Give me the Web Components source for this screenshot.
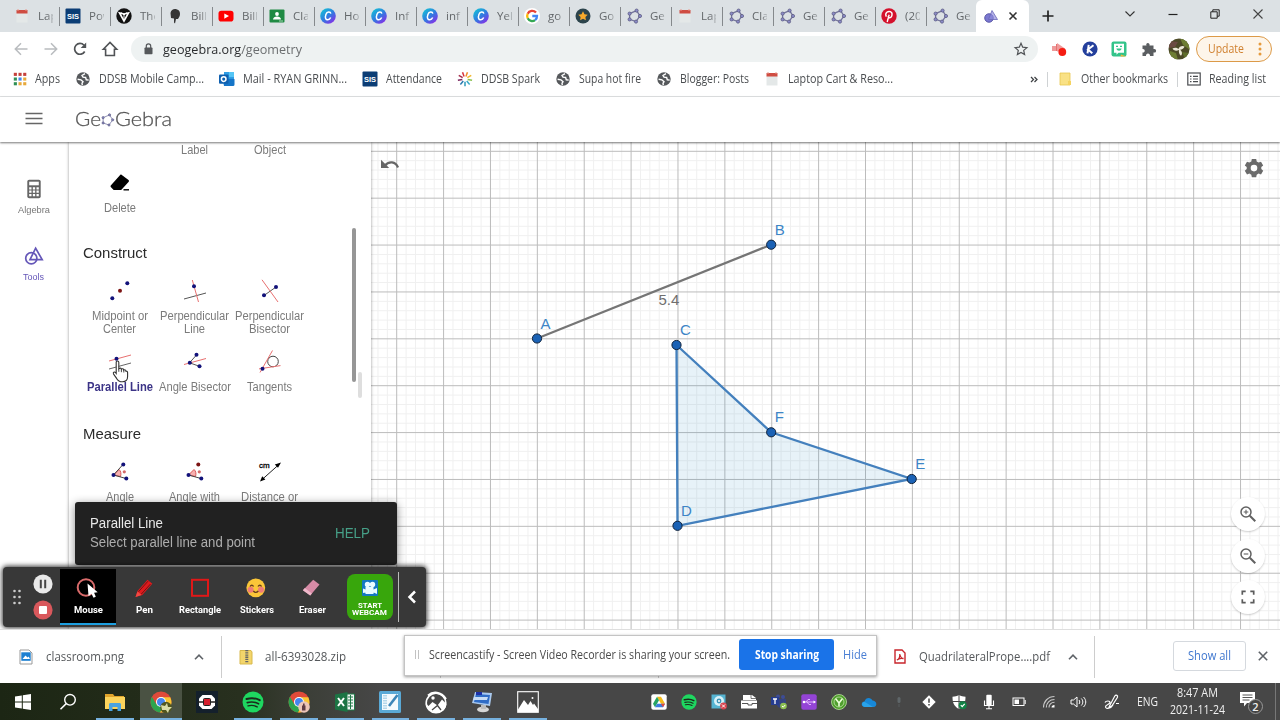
<!DOCTYPE html>
<html lang="en">
<head>
<meta charset="utf-8">
<title>GeoGebra Geometry</title>
<style>
html, body { margin: 0; height: 100%; overflow: hidden; }
body {
  width: 1280px;
  height: 720px;
  display: flex;
  flex-direction: column;
  background: #fff;
  font: 12px/1 "Open Sans", "Noto Sans", sans-serif;
  color: #4a4d50;
}
main { flex: 1; min-height: 0; display: flex; position: relative; }
</style>
</head>
<body>
<tab-strip></tab-strip>
<address-bar></address-bar>
<bookmark-bar></bookmark-bar>
<geo-header></geo-header>
<main>
  <side-rail></side-rail>
  <tool-panel></tool-panel>
  <geo-canvas></geo-canvas>
  <snack-bar>
    <fit-text w="73">Parallel Line</fit-text>
    <fit-text slot="detail" w="165">Select parallel line and point</fit-text>
    <fit-text slot="action" w="35">HELP</fit-text>
  </snack-bar>
  <cast-bar></cast-bar>
</main>
<download-bar></download-bar>
<task-bar></task-bar>

<script>
const pentagon = (c, r, w) => {
  const p = [[3.6, 5.6], [10.6, 2.6], [14, 8], [10, 13.6], [3.6, 11.4]];
  return `<path d="M${p.map(a => a.join(' ')).join('L')}z" fill="none" stroke="${c}" stroke-width="${w}"/>` +
    p.map(a => `<circle cx="${a[0]}" cy="${a[1]}" r="${r}" fill="#8b8bc8" stroke="#55557a" stroke-width=".7"/>`).join('');
};

const chrome = `<circle cx="11" cy="11" r="10.5" fill="#e04a3a"/>
<path d="M1.9 5.8A10.5 10.5 0 0 0 10 21.5l4.6-8L11 11 6.5 13.5z" fill="#2da44e"/>
<path d="M10 21.5A10.5 10.5 0 0 0 20.2 6.2H11l4 7z" fill="#f9c632"/>
<circle cx="11" cy="11" r="5" fill="#fff"/><circle cx="11" cy="11" r="4" fill="#4486f0"/>`;

const spotify = `<circle cx="11" cy="11" r="10.5" fill="#1ed760"/>
<g fill="none" stroke="#1b2b1c" stroke-linecap="round"><path d="M4.5 8c4.500-1.300 9.500-.9 13.200 1.200" stroke-width="2"/>
<path d="M5.300 11.600c4-1.100 7.900-.6 11.200 1.200" stroke-width="1.700"/><path d="M6 14.900c3.200-.9 6.500-.5 9.200 1" stroke-width="1.400"/></g>`;

const dot = (x, y, c = '#12127a', r = 2) => `<circle cx="${x}" cy="${y}" r="${r}" fill="${c}"/>`;
const zoomGlass = inner => `<g fill="none" stroke="#616161" stroke-width="1.500"><circle cx="6" cy="6" r="5"/><path d="M9.800 9.800L15.300 15.300" stroke-width="2"/>${inner}</g>`;

// name: [width, height, markup]
const ICONS = {
  cal: [16, 16, '<path d="M2.500 5h11v9.500h-11z" fill="#e4e8e8"/><path d="M2.500 2h11v3.500h-11z" fill="#cf4d42"/><path d="M4 1v2M12 1v2" stroke="#e99a90"/>'],
  sis: [16, 16, '<rect x=".5" y=".5" width="15" height="15" rx="1" fill="#0b3d75"/><text x="8" y="11" text-anchor="middle" font-size="7.500" font-weight="700" font-family="Liberation Sans" fill="#fff">SIS</text>'],
  trillium: [16, 16, '<circle cx="8" cy="8" r="7.700" fill="#111"/><path d="M8 13L3.500 5l4.500 1 4.500-1z" fill="none" stroke="#fff" stroke-width="1.600"/><path d="M8 12V7L5.500 4.500M8 7l2.500-2.500" stroke="#fff" fill="none"/>'],
  head: [16, 16, '<path d="M3.500 5C4 1.500 7 .5 9.500 1.200c3.500.8 4 4 3.200 6.800L11 11H9l-1 4.500-1-1V10.500L4 10z" fill="#353535"/>'],
  youtube: [16, 16, '<rect x=".5" y="2.700" width="15" height="10.800" rx="2.800" fill="#f00"/><path d="M6.300 5.400v5.300L11 8z" fill="#fff"/>'],
  classroom: [16, 16, '<rect x=".5" y="1.500" width="15" height="13" rx="1" fill="#1f8a43"/><circle cx="8" cy="6" r="1.900" fill="#fff"/><path d="M4 11.500c0-4 8-4 8 0z" fill="#fff"/><path d="M10 13h4" stroke="#a5d6b2"/>'],
  canva: [16, 16, '<circle cx="8" cy="8" r="7.800" fill="url(#cv)"/><linearGradient id="cv" x1="0" y1="0" x2=".8" y2="1"><stop offset=".1" stop-color="#15bfd6"/><stop offset=".55" stop-color="#2f7de0"/><stop offset="1" stop-color="#8a2be8"/></linearGradient><path d="M10.800 5.700C10.500 3.500 7 3.300 5.900 6.500 4.600 10.300 6 12 7.800 11.800c1.500-.2 2.300-1.100 2.900-2.300" fill="none" stroke="#fff" stroke-width="1.500"/>'],
  google: [16, 16, '<circle cx="8" cy="8" r="8" fill="#fff"/><g fill="none" stroke-width="2.300"><path d="M12 4.600A5 5 0 0 0 3.700 5.800" stroke="#ea4335"/><path d="M3.700 5.800a5 5 0 0 0 0 4.500" stroke="#fbbc05"/><path d="M3.700 10.300a5 5 0 0 0 7.400 1.800" stroke="#34a853"/><path d="M11.100 12.100A5 5 0 0 0 13 8H8.300" stroke="#4285f4"/></g>'],
  star: [16, 16, '<circle cx="8" cy="8" r="7.500" fill="#2c444c"/><path d="M8 3.300l1.500 3 3.200.5-2.300 2.200.5 3.200L8 10.700l-2.900 1.500.5-3.200-2.300-2.200 3.200-.5z" fill="#f8aa2c"/>'],
  geo: [16, 16, pentagon('#73739a', 1.6, 1.3)],
  logoO: [14, 14, `<g transform="translate(-1.2 -.5) scale(.92)">${pentagon('#8a8ab0', 1.2, 1)}</g>`],
  pin: [16, 16, '<circle cx="8" cy="8" r="7.700" fill="#d4112c"/><path d="M6.200 14l1.900-7.300M5.300 8.600C3.300 4.300 7.400 3 9.300 3.700c3.100 1.200 1.600 6.200-.6 6-1.100 0-1.600-1-1.400-1.600" fill="none" stroke="#fff" stroke-width="1.400"/>'],
  shapes: [14, 14, '<circle cx="5" cy="9" r="4.300" fill="#7b78d0" stroke="#49469a" stroke-width=".8"/><path d="M8 1.500l5.500 9H4.500z" fill="#8f8cdcaa" stroke="#6a67b8" stroke-width=".8"/>'],
  x: [10, 10, '<path d="M1.500 1.500l7 7M8.500 1.500l-7 7" stroke="#333" stroke-width="1.600"/>'],
  dismiss: [10, 10, '<path d="M.8.8l8.400 8.400M9.200.8L.8 9.200" stroke="#5f6368" stroke-width="1.600"/>'],
  plus: [12, 12, '<path d="M6 .5v11M.5 6h11" stroke="#222" stroke-width="1.700"/>'],
  down: [12, 8, '<path d="M1.500 1.500L6 6l4.500-4.500" fill="none" stroke="#333" stroke-width="1.100"/>'],
  up: [10, 8, '<path d="M1 6.300L5 2.200l4 4.100" fill="none" stroke="#5f6368" stroke-width="1.600"/>'],
  min: [10, 10, '<path d="M.5 5.500h9" stroke="#222" stroke-width="1.200"/>'],
  max: [10, 10, '<path d="M.8 2.800h6.400v6.400H.8zM2.800 2.800V.8h6.400v6.400H7.200" fill="none" stroke="#222"/>'],
  close: [12, 12, '<path d="M1.500 1.500l9 9M10.500 1.500l-9 9" stroke="#444" stroke-width="1.100"/>'],
  back: [14, 14, '<path d="M13.500 7H1.500M7 1.300L1.300 7 7 12.700" fill="none" stroke="#b9bcbf" stroke-width="1.500"/>'],
  fwd: [14, 14, '<path d="M.5 7h12M7 1.300L12.700 7 7 12.700" fill="none" stroke="#b9bcbf" stroke-width="1.500"/>'],
  reload: [14, 14, '<path d="M11.700 9.500A5.400 5.400 0 1 1 11 3.200" fill="none" stroke="#505356" stroke-width="1.700"/><path d="M13.200.5v5.500H7.700z" fill="#505356"/>'],
  home: [16, 16, '<path d="M1.300 8.300L8 1.500l6.700 6.800h-2.300v6.200H3.600V8.300z" fill="none" stroke="#505356" stroke-width="1.600"/>'],
  lock: [9, 12, '<rect x=".5" y="4.500" width="8" height="6.800" rx=".8" fill="#55585b"/><path d="M2.300 5V3a2.200 2.200 0 0 1 4.400 0v2" fill="none" stroke="#55585b" stroke-width="1.200"/>'],
  favorite: [14, 14, '<path d="M7 1.300l1.700 3.900 4.200.4-3.200 2.800.9 4.200L7 10.400l-3.600 2.200.9-4.200L1.100 5.600l4.200-.4z" fill="none" stroke="#505356" stroke-width="1.200"/>'],
  cast: [18, 16, '<path d="M2 5h4v5H2zM7 5V2l8 5.500-1 2-7 1z" fill="#ef9a9a"/><path d="M6.500 3v7" stroke="#e57373"/><circle cx="12.300" cy="11" r="3.900" fill="#f51d13"/>'],
  kami: [16, 16, '<circle cx="8" cy="8" r="7.600" fill="#243f9c"/><path d="M6.700 3.800l-1.200 8.500M11.500 4.200L6 8.500l4.300 3.700" stroke="#fff" stroke-width="2" fill="none"/>'],
  bitmoji: [16, 16, '<rect x=".5" y=".5" width="15" height="15" rx="2" fill="#33c48a"/><path d="M3 2.800h10v8.900H7.500L5.500 13.700v-2H3z" fill="#fff"/><path d="M5.300 7.500c1 3 4.400 3 5.400 0z" fill="#33c48a"/><path d="M5 5.300h2M9 5.300h2" stroke="#33c48a" stroke-width="1.200"/><path d="M10 13.500l5.500 2h-6z" fill="#f2b33c"/>'],
  puzzle: [16, 16, '<path d="M1.500 4.500h4C4 1 9.500 1 8.500 4.500h4V8c3.500-1 3.500 4.500 0 3.500v3.500H9c.5-3.500-4.500-3.500-4 0H1.500v-3.500c3 .5 3-4 0-3.500z" fill="#5b5e61"/>'],
  avatar: [22, 22, '<clipPath id="av"><circle cx="11" cy="11" r="10.500"/></clipPath><g clip-path="url(#av)"><path d="M0 0h22v22H0z" fill="#4c4a27"/><path d="M12 0l10 3v9l-7-5zM2 13l6 2 2 7H0z" fill="#6d7d33"/><path d="M1 3l9 1-3 5-6 1z" fill="#6b4b42"/><path d="M14 14l7 1-4 6z" fill="#5f6e2c"/><path d="M11 12c-3 1.500-5.500.5-6.500-1.500 2-1.200 4.500-.8 6 .5.500-2.500 4-4 6-2.500-.3 2-2.500 3-4.500 3.200 2 1.300 2.800 4.300 1 6-1.700-1-2.400-3.300-2-5.700z" fill="#ece9d8"/></g>'],
  dots: [4, 14, '<g fill="#e69a3c"><circle cx="2" cy="2" r="1.500"/><circle cx="2" cy="7" r="1.500"/><circle cx="2" cy="12" r="1.500"/></g>'],
  apps: [14, 14, ['#c5403b', '#c5403b', '#c5403b', '#2f8f54', '#4386e8', '#e8a93a', '#2f8f54', '#e8a93a', '#e8a93a'].map((c, i) => `<rect x="${.8 + i % 3 * 4.7}" y="${.8 + Math.floor(i / 3) * 4.7}" width="3.100" height="3.100" fill="${c}"/>`).join('')],
  globe: [16, 16, '<circle cx="8" cy="8" r="6.700" fill="#55585b"/><path d="M2.600 8.300l3.300.5L8 10.600l-1 1.700.3 1.700" fill="none" stroke="#fff" stroke-width="1.400"/><path d="M10 2.700L7 4.500l1 1.700 2.600.3.700 2.300 2.400.3" fill="none" stroke="#fff" stroke-width="1.400"/>'],
  outlook: [16, 16, '<path d="M5 1h10v10H5z" fill="#2f9de4"/><path d="M10 1h5v5h-5z" fill="#55c5f5"/><path d="M3.500 7.500L15.500 8v5.500a1.500 1.500 0 0 1-1.500 1.500H5z" fill="#1575c8"/><rect x="0" y="3.500" width="9.500" height="9.300" rx="1" fill="#0f60b0"/><circle cx="4.700" cy="8.100" r="2.300" fill="none" stroke="#fff" stroke-width="1.500"/>'],
  spark: [16, 16, ['#d8323c', '#f08b2a', '#f3b82c', '#8cc152', '#3aa9c9', '#2c9ab8', '#2a7bb0', '#7d2a62', '#a52a48'].map((c, i) => `<path d="M8 5.300V.8" stroke="${c}" stroke-width="1.500" transform="rotate(${i * 40 - 20} 8 8)"/>`).join('')],
  folder: [16, 16, '<path d="M3 2h10v12H3z" fill="#f9e185" stroke="#e8c64f" stroke-width=".8"/><path d="M11 10h3v4h-3z" fill="#f5d35f"/>'],
  reading: [14, 14, '<rect x=".8" y="1" width="12.400" height="12" fill="none" stroke="#4a4d50" stroke-width="1.200"/><path d="M3 4.300h1.500M6 4.300h5M3 7h1.500M6 7h5M3 9.700h1.500M6 9.700h5" stroke="#4a4d50" stroke-width="1.200"/>'],
  more: [8, 7, '<path d="M1 1l2.500 2.500L1 6M4.500 1L7 3.500 4.500 6" fill="none" stroke="#3f4245" stroke-width="1.300"/>'],
  burger: [18, 14, '<path d="M.5 1.500h17M.5 6.500h17M.5 11.500h17" stroke="#666" stroke-width="1.700"/>'],
  calc: [16, 20, '<rect x="1.300" y=".8" width="13.400" height="18.400" rx="1.800" fill="#666"/><path d="M3.200 2.700h9.600v3.600H3.200z" fill="#fff"/><g fill="#fff"><path d="M3.200 8.200h2.300v2.200H3.200zM6.850 8.200h2.300v2.200h-2.300zM10.500 8.200h2.300v2.200h-2.300zM3.200 11.600h2.300v2.200H3.200zM6.850 11.600h2.300v2.200h-2.300zM10.500 11.600h2.300v2.200h-2.300zM3.200 15h2.300v2.200H3.200zM6.850 15h2.300v2.200h-2.300zM10.500 15h2.300v2.200h-2.300z"/></g>'],
  tools: [20, 20, '<circle cx="7.300" cy="12.300" r="5.600" fill="none" stroke="#6557b8" stroke-width="1.700"/><path d="M11.600 2.200l6.600 11.500H6z" fill="none" stroke="#6557b8" stroke-width="1.700"/>'],
  eraser: [24, 24, '<path d="M13.500 3.800l7 5.200c.7.600.6 1.400 0 2.100l-7.300 8H5.700L3 16.300c-.7-.8-.5-1.600.2-2.300l8.500-9.600c.6-.8 1.200-1.100 1.800-.6z"/><path d="M15.500 18.800h5.500" stroke="#000" stroke-width="1.400"/>'],
  midpoint: [24, 24, dot(4.300, 19.300) + dot(12, 11.800, '#7c1414') + dot(19.300, 4.300)],
  perp: [24, 24, '<path d="M1 20l22-6" stroke="#555"/><path d="M9.300 1l6.200 22" stroke="#e87070"/>' + dot(11, 7.300)],
  perpbis: [24, 24, '<path d="M6 16.500L18 8" stroke="#555"/><path d="M4 .8L20 23" stroke="#e87070"/>' + dot(6, 16.300) + dot(18, 8)],
  parallel: [24, 24, '<path d="M1 11L23 5" stroke="#e87070"/><path d="M1 19l22-6" stroke="#666"/>' + dot(8.500, 8.800)],
  anglebis: [24, 24, '<path d="M13.500 5L6.500 12.800l10 3.500" fill="none" stroke="#555"/><path d="M1 14.500l22-6" stroke="#e87070"/>' + dot(13.500, 4.800) + dot(6.800, 12.800) + dot(16.500, 16.300)],
  tangents: [24, 24, '<circle cx="15" cy="11.500" r="5.300" fill="none" stroke="#444"/><path d="M2 22.500L14.500.5M1 18.900l21.500-3.300" stroke="#e87070"/>' + dot(4.500, 18.800)],
  angle: [24, 24, '<path d="M5.500 15L11 9.500c2 1.500 2.300 4.500 1.500 7z" fill="#f7b0b0" stroke="#d95555"/><path d="M15 4.500L5.500 15l12.500 3.500" fill="none" stroke="#444"/>' + dot(15.300, 4.500) + dot(5.500, 15) + dot(18.300, 18.500) + dot(16.300, 11.800, '#d46a6a', 1.600)],
  anglesize: [24, 24, '<path d="M5.500 15L11 9.500c2 1.500 2.300 4.500 1.500 7z" fill="#f7b0b0" stroke="#d95555"/><path d="M5.500 15l12.500 3.500" fill="none" stroke="#444"/>' + dot(15.300, 4.500, '#7c1414') + dot(5.500, 15) + dot(18.300, 18.500) + dot(16.300, 11.800, '#d46a6a', 1.600)],
  distance: [24, 24, '<path d="M3 20.500L21.500 4" stroke="#222"/><path d="M2 21.500l2.200-5.300 3.200 3.200zM23 2.500l-3 5.200-3.200-3.300z"/><text x="1" y="7.500" font-size="8" font-family="Liberation Sans" fill="#000" stroke="#000" stroke-width=".3">cm</text>'],
  undo: [20, 12, '<path d="M4.500 8C9 2.600 15.500 3.500 18 9.500" fill="none" stroke="#666" stroke-width="2.300"/><path d="M1 1.800v8.200h8.200z" fill="#666"/>'],
  gear: [20, 20, '<path d="M7.800 1h4.400l.5 2.500 1.900 1.100 2.400-.9 2.200 3.800-1.900 1.600v2l1.900 1.600-2.200 3.800-2.400-.9-1.900 1.100-.5 2.500H7.800l-.5-2.500-1.900-1.100-2.400.9L.8 12.700l1.900-1.600v-2L.8 7.500 3 3.700l2.400.9 1.900-1.100z" fill="#6a6a6a"/><circle cx="10" cy="10.100" r="3.300" fill="#fff"/>'],
  zoomin: [16, 16, zoomGlass('<path d="M3.700 6h4.600M6 3.700v4.600" stroke-width="1.100"/>')],
  zoomout: [16, 16, zoomGlass('<path d="M3.700 6h4.600" stroke-width="1.100"/>')],
  full: [16, 16, '<path d="M2.300 5.700V2.300h3.400M10.300 2.300h3.400v3.400M13.700 10.300v3.400h-3.400M5.700 13.700H2.300v-3.400" fill="none" stroke="#5c5c5c" stroke-width="1.700"/>'],
  grip: [8, 16, [2, 8, 14].map(y => `<circle cx="1.500" cy="${y}" r="1.300" fill="#ccc"/><circle cx="6.500" cy="${y}" r="1.300" fill="#ccc"/>`).join('')],
  pause: [20, 20, '<circle cx="10" cy="10" r="9.600" fill="#e9e9e9"/><path d="M7.800 5.800v8.400M12.200 5.800v8.400" stroke="#444" stroke-width="2"/>'],
  stop: [20, 20, '<circle cx="10" cy="10" r="9.600" fill="#d9585c"/><rect x="6" y="6" width="8" height="8" rx="1" fill="#fff"/>'],
  mouse: [22, 22, '<circle cx="9" cy="10.500" r="8.300" fill="none" stroke="#d96b6b" stroke-width="2"/><path d="M10.500 6.500l1 12.500 3-2.300 2 4 2.300-1-1.700-3.900 3.600-.6z" fill="#fff"/>'],
  pen: [22, 22, '<path d="M14.500 2.800l4.800 4-10 11.200-6.800 1.900 2-6z" fill="#e0191c"/><path d="M15 4.200l-9.500 10.500M17.500 7L8 17.400" stroke="#701616" stroke-width="1"/><path d="M4.500 14.500L8.600 18l-6.100 2z" fill="#f04a44"/>'],
  rect: [22, 22, '<rect x="3" y="2.800" width="16" height="16" fill="none" stroke="#e01818" stroke-width="2"/>'],
  sticker: [22, 22, '<circle cx="9.800" cy="10.800" r="9.400" fill="#fbc638"/><circle cx="4.600" cy="12.800" r="3" fill="#ef7d78"/><circle cx="15" cy="12.800" r="3" fill="#ef7d78"/><path d="M4 9.500c1-1.700 2.600-1.700 3.600 0M12 9.500c1-1.700 2.600-1.700 3.600 0M7.300 14c1.500 1.800 3.500 1.800 5 0" fill="none" stroke="#6b3e1e" stroke-width="1.300"/>'],
  rubber: [22, 22, '<g transform="translate(-1.500)"><path d="M12.700 2.800l6.300 4.700-9.300 11-7.300-5.300z" fill="#d78ba6"/><path d="M2.400 13.200l7.300 5.300 1.700-2-7.100-5.500z" fill="#efb9cb"/></g>'],
  webcam: [16, 16, '<rect width="16" height="16" rx="1" fill="#1478c0"/><circle cx="5.500" cy="4.500" r="2.700" fill="#e8fbff"/><circle cx="10.500" cy="4.500" r="2.700" fill="#e8fbff"/><path d="M3.500 7h8v7h-8zM11.500 9.500L15 8v6l-3.500-1.500zM1 8.500l2.500 1v3L1 13z" fill="#e8fbff"/>'],
  left: [10, 16, '<path d="M8 2.500L2.500 8 8 13.500" fill="none" stroke="#fff" stroke-width="2.500"/>'],
  hand: [18, 24, '<path d="M4.200 2.300c0-1.800 2.600-1.800 2.600 0v6.500l.6-.4c1.200-.7 1.900 0 2 .8.800-.8 2.200-.4 2.300.8 1-.6 2.300 0 2.300 1.200.9-.2 1.600.5 1.600 1.400v4c0 3-1.700 5.200-5 5.200-3.500 0-4.800-1-6-3.400L1.600 14.100c-1-1.700.9-2.700 2-1.500l.6.800z" fill="#fff" stroke="#333" stroke-width="1.100"/><path d="M9.400 9.200v3M11.800 10v2.500M6.800 8.800v3" stroke="#333" stroke-width=".9"/>'],
  png: [14, 16, '<path d="M1 1h9l3 3v11H1z" fill="#fff" stroke="#999"/><rect x="2.300" y="3.300" width="9.400" height="8.500" fill="#1c7fd1"/><path d="M3.500 10l3-3.500 2 2 1.200-1L11 10z" fill="#fff"/>'],
  zip: [14, 16, '<path d="M1 1.500h11l1 1.500v12H1z" fill="#f3d56b" stroke="#d8b94c"/><path d="M7.800 1v13" stroke="#666" stroke-width="3" stroke-dasharray="1.300 .9"/>'],
  pdf: [12, 15, '<path d="M1 1h7l3 3v10H1z" fill="#fff" stroke="#c8262c" stroke-width="1.400"/><path d="M3 11c1.500-.5 3-3 2.800-6 .5 3 2 4.500 3.700 4.500C7 9 4.500 9.500 3 11z" fill="none" stroke="#c8262c" stroke-width="1.300"/>'],
  windows: [16, 16, '<path d="M0 2.500l6.800-1v6H0zM7.800 1.300L16 0v7.500H7.800zM0 8.500h6.800v6l-6.800-1zM7.800 8.500H16V16l-8.200-1.300z" fill="#fff"/>'],
  search: [18, 18, '<circle cx="10" cy="6.800" r="5.300" fill="none" stroke="#fff" stroke-width="1.400"/><path d="M6.200 10.600L.5 16.300" stroke="#fff" stroke-width="1.500"/>'],
  explorer: [22, 20, '<path d="M1 2h8l1.500 2H20v3H1z" fill="#e0a42c"/><path d="M1 5h20v12H1z" fill="#fbd45c"/><path d="M5 19v-6.500c0-1 .7-1.500 1.500-1.500h9c.9 0 1.500.5 1.500 1.500V19h-3.500v-4h-5v4z" fill="#4aa3df"/>'],
  chromeA: [22, 22, chrome + '<circle cx="16" cy="16.500" r="5.700" fill="#52561f"/><path d="M11 14l4 1 2-3 1 4 4 0-3 3-1 3-2-3-4 0z" fill="#d9dca8"/>'],
  chromeB: [22, 22, chrome + '<circle cx="16" cy="16" r="5.800" fill="#ecc5b8"/><path d="M14 14.500h3.500v5H14zM15 12.500h1.600v2H15z" fill="#5e3c44"/>'],
  recorder: [22, 22, '<rect width="22" height="22" fill="#14202c"/><path d="M6.500 4h9l3.500 3.500v7L15.500 18h-9L3 14.500v-7z" fill="#fff"/><path d="M2 11h18" stroke="#222" stroke-width="1.500"/><rect x="7.500" y="7.500" width="7" height="7" rx="1" fill="#d51f2d" stroke="#222"/>'],
  spotify: [22, 22, spotify],
  spotifyS: [16, 16, `<g transform="scale(.727)">${spotify}</g>`],
  excel: [22, 22, '<path d="M12 3h8.500v16H12z" fill="#f4f7f5" stroke="#1f7a48"/><path d="M14 6h5M14 9h5M14 12h5M14 15h5M16.500 4v14" stroke="#1f7a48"/><path d="M1 3.500L13.500 1v20L1 18.500z" fill="#1c7444"/><path d="M4 7l6 8M10 7l-6 8" stroke="#fff" stroke-width="2"/>'],
  notebook: [22, 22, '<rect width="22" height="22" rx="1.500" fill="#5aa9d6"/><rect x="3" y="3" width="16" height="16" fill="#f4fafd"/><path d="M5 4v14M7 4v14" stroke="#75b5d8" stroke-dasharray="1.500 1"/><path d="M18.500 4L10 15" stroke="#3d86b8" stroke-width="2.600"/>'],
  draw: [24, 22, '<circle cx="12" cy="12" r="9.800" fill="none" stroke="#fff" stroke-width="1.600"/><path d="M1.500 12.500C3 19 8 21.500 13 21.500c6 0 9-4 9.500-8.500L18 8.500l-4.500 6L8.500 11l-4 4z" fill="#fff"/><path d="M4 4.500c5-4.500 13-4 18 3.500" stroke="#fff" stroke-width="2" fill="none"/><circle cx="9" cy="7" r="1.700" fill="#fff"/><path d="M8 19l5.500-4.500L17 19" stroke="#474747" stroke-width="1.300" fill="none"/>'],
  remote: [24, 22, '<path d="M5 1l17 1-2 13L2 12z" fill="#a9c9ef"/><path d="M6 3l14 1-1.500 9L4 11z" fill="#2f6cc6"/><path d="M4 6h14l-1 3H3z" fill="#c7dcf5"/><path d="M6 1h6v3H6z" fill="#1b2fa8"/><ellipse cx="13" cy="18.500" rx="6" ry="2.800" fill="#d6d6d6"/><path d="M11 14h5v4h-5z" fill="#bbb"/>'],
  photos: [22, 22, '<rect x=".7" y=".7" width="20.600" height="20.600" fill="#474747" stroke="#fff" stroke-width="1.100"/><path d="M1 18.500L7 9l4 5 2.500-4 2.500 4 1-1.500L21 18v3H1z" fill="#fff"/><circle cx="15.500" cy="7" r="1" fill="#fff"/>'],
  drive: [16, 16, '<rect x=".3" y=".3" width="15.400" height="15.400" rx="2" fill="#fff"/><path d="M6 2.800h4l4 7h-4z" fill="#f5ba18"/><path d="M6 2.800L8 6.300l-4 7L2 9.800z" fill="#26a464"/><path d="M6 9.800h8l-2 3.500H4z" fill="#3c7de0"/><path d="M10 9.800h4l-2 3.500z" fill="#e4493a"/>'],
  disc: [16, 16, '<rect x=".5" y=".5" width="14" height="14" fill="#55b4d2"/><circle cx="8" cy="7" r="5" fill="#d8f1f8"/><circle cx="8" cy="7" r="2.400" fill="#3a93b6"/><circle cx="8" cy="7" r="1" fill="#fff"/><circle cx="12.500" cy="12" r="3.400" fill="#d9434e"/><path d="M11 10.500l3 3M14 10.500l-3 3" stroke="#fff"/>'],
  printer: [18, 16, '<path d="M3 1h9l4 3v2H3zM1 6.500h16V14.500H1z" fill="#fff"/><path d="M2 9.500h6v1.500h4V9.500h5" fill="none" stroke="#555"/><path d="M11 1v3.500h5" fill="none" stroke="#555" stroke-width=".8"/>'],
  teams: [16, 16, '<circle cx="12" cy="3" r="2" fill="#3d4c96"/><circle cx="7" cy="2.500" r="2" fill="#3d4c96"/><path d="M6 5h9v6c0 4-9 4-9 0z" fill="#35437f"/><rect x="0" y="3" width="8" height="8" fill="#263d91"/><path d="M2 5h4M4 5v5" stroke="#fff" stroke-width="1.300"/><circle cx="12.500" cy="12" r="3.300" fill="#8dc152"/><path d="M11 12l1.200 1.200 2-2.200" stroke="#fff" fill="none"/>'],
  usb: [16, 16, '<rect x=".3" y=".3" width="15.400" height="15.400" rx="2" fill="#9444d6"/><path d="M2 8h12M5 8l2-2.500h2M6 8l2 2.500h2" fill="none" stroke="#e4b9ff"/><circle cx="3" cy="8" r="1.300" fill="#fff"/><path d="M12.500 6.500L15 8l-2.500 1.500z" fill="#fff"/>'],
  vpn: [16, 16, '<circle cx="8" cy="8" r="7.500" fill="#4f9e2d" stroke="#bbe3a0" stroke-width=".8"/><path d="M4.500 4.500L8 9v3.500M11.500 4.500L8 9" fill="none" stroke="#eaffd8" stroke-width="1.600"/><circle cx="8" cy="8" r="5" fill="none" stroke="#d6f1bf" stroke-width=".7"/>'],
  cloud: [16, 12, '<path d="M3.500 11C-.5 10.500.2 5.500 3.500 5.500 4.700 1 10 1 11.500 4.500c4 0 5.500 5.500 1.500 6.500z" fill="#1788d8"/><path d="M4 11C.5 10.500 0 6 3.500 5.700L12 11z" fill="#2aa3ea"/>'],
  micS: [8, 12, '<rect x="2.500" y="1" width="3" height="6" rx="1.500" fill="#5f6669"/><path d="M4 8v3" stroke="#565c5e"/>'],
  diamond: [14, 14, '<path d="M7 .3L13.700 7 7 13.700.3 7z" fill="#fff"/><path d="M7 3.500v4.300M7 9v1.500" stroke="#444" stroke-width="1.500"/>'],
  shield: [16, 16, '<path d="M8 1c2 1.200 4 1.700 6.500 1.700C14.500 8 13.500 12 8 15 2.500 12 1.500 8 1.500 2.700 4 2.700 6 2.200 8 1z" fill="#fff"/><path d="M8 1v14M1.500 7.500h13" stroke="#474747"/><circle cx="11.700" cy="11.200" r="4" fill="#128346"/><path d="M9.800 11.200l1.400 1.500 2.500-2.800" stroke="#fff" fill="none" stroke-width="1.200"/>'],
  mic: [12, 16, '<rect x="3.300" y=".8" width="5.400" height="10.400" rx="1" fill="#fff"/><path d="M1.500 6.500V11.500h9V6.500M6 11v3.500M3 14.800h6" fill="none" stroke="#fff" stroke-width="1.100"/>'],
  battery: [14, 10, '<rect x="1" y="1" width="11" height="7.500" fill="none" stroke="#fff"/><path d="M2.500 2.500H7V7H2.500z" fill="#fff"/><path d="M13.200 3v4" stroke="#fff"/>'],
  wifi: [14, 14, '<g fill="none" stroke="#c9c9c9" stroke-width="1.100"><path d="M1.500 12.500c0-6 4.500-11 11-11"/><path d="M4.300 12.500c0-4.500 3.200-8 8.200-8"/><path d="M7 12.500c0-3 2-5.200 5.500-5.200"/></g><path d="M9.500 12.500c0-1.600 1-2.500 3-2.500v2.500z" fill="#fff"/>'],
  speaker: [18, 14, '<path d="M1 5h2.500L7 2v10L3.500 9H1z" fill="none" stroke="#fff"/><path d="M9 5c1 1.300 1 2.700 0 4M11.300 3.500c2 2 2 5 0 7M13.500 2c3 3 3 7 0 10" fill="none" stroke="#fff"/>'],
  ink: [18, 16, '<path d="M2 8.500c1-2 5-2 5 0s-5 2-4.500 4.500S8 14.500 10 11M6.500 12L11.800 2c1.200-1.500 3.300-.5 2.700 1.200L9 11.800l-3 1.500zM13 9.500h3" fill="none" stroke="#fff" stroke-width="1.200"/>']
};

// an element whose shadow root is a copy of one template
function define(name, html) {
  const template = document.createElement('template');
  template.innerHTML = html;
  customElements.define(name, class extends HTMLElement {
    constructor() {
      super();
      this.attachShadow({ mode: 'open' });
      this.shadowRoot.appendChild(template.content.cloneNode(true));
    }
  });
}

class UiIcon extends HTMLElement {
  constructor() {
    super();
    this.attachShadow({ mode: 'open' });
  }
  connectedCallback() {
    const [w, h, body] = ICONS[this.getAttribute('name')];
    this.shadowRoot.innerHTML = `<style>:host{display:block;flex:none;width:${w}px;height:${h}px} svg{display:block;overflow:visible}</style>
      <svg width="${w}" height="${h}" viewBox="0 0 ${w} ${h}">${body}</svg>`;
  }
}
customElements.define('ui-icon', UiIcon);

define('browser-tab', `
<style>
:host { flex: none; box-sizing: border-box; width: 51px; height: 19px; display: flex; align-items: center; gap: 8px; padding-left: 5px; border-right: 1px solid #85898c; color: #63676a; }
span { width: 15px; height: 16px; line-height: 16px; overflow: hidden; white-space: nowrap; -webkit-mask: linear-gradient(90deg, #000 60%, #0005); }
</style>
<slot name="icon"></slot><span><slot></slot></span>`);

const tabs = [['cal', 'Lap'], ['sis', 'Pow'], ['trillium', 'The'], ['head', 'Bill'], ['youtube', 'Bill'], ['classroom', 'Cla'], ['canva', 'Ho'], ['canva', 'Inf'], ['canva', 'inf'], ['canva', 'Yel'], ['google', 'go'], ['star', 'Go'], ['geo', 'Ge'], ['cal', 'Lap'], ['geo', 'Cla'], ['geo', 'Ge'], ['geo', 'Ge'], ['pin', '(20'], ['geo', 'Ge']];

define('tab-strip', `
<style>
:host { flex: none; height: 32px; display: flex; align-items: center; background: #dce1e4; padding-left: 9px; font-size: 11.500px; }
.active { align-self: stretch; width: 53px; box-sizing: border-box; display: flex; align-items: center; gap: 10px; padding-left: 8px; background: #fff; border-radius: 6px 6px 0 0; margin-right: 13px; }
browser-tab:last-of-type { border-color: transparent; width: 49px; }
.win { margin-left: auto; display: flex; align-items: center; gap: 32px; padding: 0 16px 5px 0; }
</style>
${tabs.map(([icon, text]) => `<browser-tab><ui-icon slot="icon" name="${icon}"></ui-icon>${text}</browser-tab>`).join('')}
<div class="active"><ui-icon name="shapes"></ui-icon><ui-icon name="x"></ui-icon></div>
<ui-icon name="plus"></ui-icon>
<div class="win"><ui-icon name="down"></ui-icon><ui-icon name="min"></ui-icon><ui-icon name="max"></ui-icon><ui-icon name="close"></ui-icon></div>`);

define('address-bar', `
<style>
:host { flex: none; height: 32px; display: flex; align-items: center; padding: 2px 8px 0 14px; box-sizing: border-box; background: #fff; }
nav { flex: none; display: flex; align-items: center; gap: 15.700px; width: 117px; }
nav ui-icon:last-child { margin-left: -1px; }
.box { flex: none; width: 907px; box-sizing: border-box; height: 26px; border-radius: 13px; background: #eef2f2; display: flex; align-items: center; padding: 0 10px 0 13px; font-size: 13px; color: #6b6e70; }
.box fit-text { margin-left: 10px; margin-right: auto; }
b { font-weight: 400; color: #2a2c2e; }
.ext { display: flex; align-items: center; gap: 13.500px; margin: 0 6px 0 12px; }
.update { flex: none; box-sizing: border-box; width: 76px; height: 26px; border: 1.500px solid #dc9a48; border-radius: 13px; background: #fdf5ea; color: #d08130; display: flex; align-items: center; justify-content: space-between; padding: 0 9px 0 11px; }
</style>
<nav><ui-icon name="back"></ui-icon><ui-icon name="fwd"></ui-icon><ui-icon name="reload"></ui-icon><ui-icon name="home"></ui-icon></nav>
<div class="box"><ui-icon name="lock"></ui-icon><fit-text w="139"><b>geogebra.org</b>/geometry</fit-text><ui-icon name="favorite"></ui-icon></div>
<div class="ext"><ui-icon name="cast"></ui-icon><ui-icon name="kami"></ui-icon><ui-icon name="bitmoji"></ui-icon><ui-icon name="puzzle"></ui-icon><ui-icon name="avatar" style="margin-left:-2px"></ui-icon></div>
<div class="update"><fit-text w="36">Update</fit-text><ui-icon name="dots"></ui-icon></div>`);

define('bookmark-item', `
<style>
:host { flex: none; display: flex; align-items: center; gap: 8px; }
</style>
<slot name="icon"></slot><slot></slot>`);

const bookmark = (icon, text, w) => `<bookmark-item><ui-icon slot="icon" name="${icon}"></ui-icon><fit-text w="${w}">${text}</fit-text></bookmark-item>`;

define('bookmark-bar', `
<style>
:host { flex: none; box-sizing: border-box; height: 33px; display: flex; align-items: center; gap: 15px; padding: 0 14px 2px 13px; border-bottom: 1px solid #e2e4e5; font-size: 12px; color: #4a4d50; }
.end { margin-left: auto; display: flex; align-items: center; gap: 9px; }
i { width: 1px; height: 15px; background: #cfd2d4; }
</style>
${bookmark('apps', 'Apps', 25)}${bookmark('globe', 'DDSB Mobile Camp...', 105)}${bookmark('outlook', 'Mail - RYAN GRINN...', 104)}${bookmark('sis', 'Attendance', 56)}${bookmark('spark', 'DDSB Spark', 59)}${bookmark('globe', 'Supa hot fire', 62)}${bookmark('globe', 'Blogger: Posts', 69)}${bookmark('cal', 'Laptop Cart &amp; Reso...', 105)}
<div class="end"><ui-icon name="more"></ui-icon><i></i>${bookmark('folder', 'Other bookmarks', 87)}<i></i>${bookmark('reading', 'Reading list', 57)}</div>`);

define('geo-header', `
<style>
:host { flex: none; position: relative; z-index: 2; box-sizing: border-box; height: 45px; display: flex; align-items: center; padding: 0 0 1px 25px; background: #fff; box-shadow: 0 1px 2px #0008; }
.logo { display: flex; align-items: center; margin: -3px 0 0 32px; font: 300 20px/24px Lato, sans-serif; color: #4c4c4c; -webkit-text-stroke: .3px #666; }
.logo ui-icon { margin: 5px 0 0; }
</style>
<ui-icon name="burger"></ui-icon>
<div class="logo"><fit-text w="26">Ge</fit-text><ui-icon name="logoO"></ui-icon><fit-text w="57">Gebra</fit-text></div>`);

define('side-rail', `
<style>
:host { flex: none; box-sizing: border-box; width: 68px; display: flex; flex-direction: column; align-items: center; padding: 36.500px 1px 0 0; background: #fff; font: 9.500px/12px "Liberation Sans", Arial, sans-serif; color: #777; }
.on { color: #6557b8; margin-top: 30px; }
div { display: flex; flex-direction: column; align-items: center; gap: 5px; }
</style>
<div><ui-icon name="calc"></ui-icon><fit-text w="32" style="margin-top:.5px">Algebra</fit-text></div>
<div class="on"><ui-icon name="tools"></ui-icon><fit-text w="21">Tools</fit-text></div>`);

define('tool-item', `
<style>
:host { display: flex; flex-direction: column; align-items: center; gap: 7px; line-height: 13px; text-align: center; color: #7b7b7b; }
:host([active]) { color: #3c3487; font-weight: 700; }
.glyph { position: relative; }
::slotted([slot=cursor]) { position: absolute; left: 4px; top: 10px; }
div:last-child { display: flex; flex-direction: column; align-items: center; }
</style>
<div class="glyph"><slot name="icon"></slot><slot name="cursor"></slot></div><div><slot></slot></div>`);

const tool = (icon, lines, attrs = '', extra = '') => `<tool-item ${attrs}><ui-icon slot="icon" name="${icon}"></ui-icon>${extra}${lines.map(([t, w]) => `<fit-text w="${w}">${t}</fit-text>`).join('')}</tool-item>`;

define('tool-panel', `
<style>
:host { flex: none; position: relative; z-index: 1; width: 302px; margin-left: 1px; box-sizing: border-box; padding-left: 13px; overflow: hidden; background: #fff; box-shadow: 0 0 3px #0006; font: 12px/13px "Liberation Sans", Arial, sans-serif; color: #7b7b7b; }
.grid { display: grid; grid-template-columns: repeat(3, 75px); row-gap: 14px; }
.cut { height: 29px; padding-top: 1.500px; box-sizing: border-box; justify-items: center; }
h2 { margin: 28px 0 16px 1px; height: 20px; font: 15px/20px "Liberation Sans", Arial, sans-serif; color: #2b2b2b; }
.measure { margin-top: 29.500px; }
/* the two scroll thumbs float over the list */
.thumb { position: absolute; border-radius: 2px; }
.inner { left: 283px; top: 86px; width: 4px; height: 154px; background: #969696; }
.outer { left: 289px; top: 230px; width: 4px; height: 26px; background: #dedede; }
</style>
<div class="grid cut"><span></span><fit-text w="27">Label</fit-text><fit-text w="32">Object</fit-text></div>
<div class="grid">${tool('eraser', [['Delete', 32]])}</div>
<h2><fit-text w="64">Construct</fit-text></h2>
<div class="grid">
${tool('midpoint', [['Midpoint or', 56], ['Center', 33]])}
${tool('perp', [['Perpendicular', 69], ['Line', 21]])}
${tool('perpbis', [['Perpendicular', 69], ['Bisector', 41]])}
${tool('parallel', [['Parallel Line', 66]], 'active', '<ui-icon slot="cursor" name="hand"></ui-icon>')}
${tool('anglebis', [['Angle Bisector', 72]])}
${tool('tangents', [['Tangents', 45]])}
</div>
<h2 class="measure"><fit-text w="58">Measure</fit-text></h2>
<div class="grid">
${tool('angle', [['Angle', 28]])}
${tool('anglesize', [['Angle with', 51]])}
${tool('distance', [['Distance or', 57]])}
</div>
<div class="thumb inner"></div><div class="thumb outer"></div>`);

class GeoCanvas extends HTMLElement {
  constructor() {
    super();
    this.attachShadow({ mode: 'open' });
    const unit = 46.88, ox = 396.7, oy = 151.3;
    let minor = '', major = '';
    for (let i = -3; i < 96; i++) {
      const x = (ox + i * unit / 5).toFixed(2), y = (oy + i * unit / 5).toFixed(2);
      if (i % 5) minor += `M${x} 142V629M371 ${y}H1280`;
      else major += `M${x} 142V629M371 ${y}H1280`;
    }
    const points = { A: [537, 338.5], B: [771.2, 244.7], C: [676.5, 345], D: [677.5, 525.8], E: [911.7, 479], F: [771.2, 432.3] };
    this.shadowRoot.innerHTML = `
<style>
:host { flex: 1; position: relative; display: block; overflow: hidden; background: #fff; }
svg { display: block; }
text { font: 15px "Liberation Sans", Arial, sans-serif; }
.undo, .gear, .zoom { position: absolute; }
.undo { left: 9px; top: 16px; }
.gear { right: 16.500px; top: 16px; }
.zoom { right: 15px; top: 355px; display: flex; flex-direction: column; gap: 7.500px; }
.zoom div { width: 34px; height: 34px; border-radius: 50%; background: #fff; box-shadow: 0 1px 2px #0003; display: flex; align-items: center; justify-content: center; }
</style>
<svg width="909" height="487" viewBox="371 142 909 487">
<path d="${minor}" stroke="#f0f0f0" stroke-width="1"/>
<path d="${major}" stroke="#bcbcbc" stroke-width="1"/>
<path d="M${['C', 'F', 'E', 'D'].map(k => points[k].join(' ')).join('L')}z" fill="#1580b81a" stroke="#4480bd" stroke-width="2.300"/>
<path d="M${points.A.join(' ')}L${points.B.join(' ')}" stroke="#757575" stroke-width="2.300"/>
<text x="658.500" y="304.500" fill="#6f6f6f">5.4</text>
${Object.entries(points).map(([k, [x, y]]) => `<circle cx="${x}" cy="${y}" r="4.600" fill="#1b62b5" stroke="#10233c" stroke-width="1"/><text x="${x + 3.5}" y="${y - 10}" fill="#3d85c6">${k}</text>`).join('')}
</svg>
<ui-icon class="undo" name="undo"></ui-icon>
<ui-icon class="gear" name="gear"></ui-icon>
<div class="zoom"><div><ui-icon name="zoomin"></ui-icon></div><div><ui-icon name="zoomout"></ui-icon></div><div><ui-icon name="full"></ui-icon></div></div>`;
  }
}
customElements.define('geo-canvas', GeoCanvas);

define('snack-bar', `
<style>
:host { position: absolute; z-index: 3; left: 75px; top: 360px; width: 322px; height: 63px; box-sizing: border-box; display: flex; align-items: center; justify-content: space-between; padding: 0 27px 0 15px; background: #212121; border-radius: 3px; box-shadow: 0 2px 10px #0007; font: 14px/19px "Liberation Sans", Arial, sans-serif; color: #e9e9e9; }
.text { display: flex; flex-direction: column; margin-top: -2px; }
.detail { color: #adadad; }
.action { color: #46a088; }
</style>
<div class="text"><slot></slot><div class="detail"><slot name="detail"></slot></div></div>
<div class="action"><slot name="action"></slot></div>`);

define('cast-tool', `
<style>
:host { flex: none; box-sizing: border-box; width: 56.200px; height: 56px; display: flex; flex-direction: column; align-items: center; padding-top: 8px; gap: 5px; border-bottom: 2.500px solid transparent; line-height: 12px; }
:host([active]) { background: #000; border-color: #1d9fe0; }
</style>
<slot name="icon"></slot><slot></slot>`);

const castTool = (icon, text, w, attrs = '') => `<cast-tool ${attrs}><ui-icon slot="icon" name="${icon}"></ui-icon><fit-text w="${w}">${text}</fit-text></cast-tool>`;

define('cast-bar', `
<style>
:host { position: absolute; z-index: 4; left: 3px; top: 425px; width: 423px; height: 60px; box-sizing: border-box; display: flex; align-items: center; padding: 0 0 1px 10px; background: #383838; border-radius: 4px; box-shadow: 0 0 5px 1px #000c; font: 700 9.500px/12px Roboto, sans-serif; color: #fff; }
.rec { display: flex; flex-direction: column; gap: 6px; margin: 1px 7px 0 12px; }
.start { width: 46px; height: 46px; border-radius: 8px; background: #38a60c; display: flex; flex-direction: column; align-items: center; box-sizing: border-box; padding-top: 6px; margin-left: 6px; font: 700 7.500px/7px Roboto, sans-serif; }
.start ui-icon { margin-bottom: 6px; }
i { width: 1px; height: 50px; background: #bbb; margin: 0 8px 0 5px; }
</style>
<ui-icon name="grip"></ui-icon>
<div class="rec"><ui-icon name="pause"></ui-icon><ui-icon name="stop"></ui-icon></div>
${castTool('mouse', 'Mouse', 29, 'active')}${castTool('pen', 'Pen', 17)}${castTool('rect', 'Rectangle', 42)}${castTool('sticker', 'Stickers', 34)}${castTool('rubber', 'Eraser', 27)}
<div class="start"><ui-icon name="webcam"></ui-icon><fit-text w="24">START</fit-text><fit-text w="35">WEBCAM</fit-text></div>
<i></i><ui-icon name="left"></ui-icon>`);

define('download-item', `
<style>
:host { flex: none; box-sizing: border-box; height: 42px; display: flex; align-items: center; border-right: 1px solid #cdcdcd; }
::slotted([slot=menu]) { margin-left: auto; }
</style>
<slot name="icon"></slot><slot></slot><slot name="menu"></slot>`);

define('share-notice', `
<style>
:host { position: absolute; left: 404px; top: 5px; width: 473px; height: 41px; box-sizing: border-box; display: flex; align-items: center; padding: 0 0 2px 10px; background: #fff; border: 1px solid #c4c4c4; box-shadow: 0 1px 3px #0006; color: #4a4a4a; }
.grip { width: 2px; height: 9px; border: solid #c2c2c2; border-width: 0 1.500px; margin-right: 10px; }
button { width: 95px; height: 31px; margin: 0 9px; padding: 0; border: 0; border-radius: 3px; background: #1a73e8; color: #fff; font: 700 12px/31px "Open Sans", sans-serif; }
a { color: #4a7fd4; }
fit-text { margin-top: 1px; }
button fit-text { margin-top: 0; }
</style>
<span class="grip"></span>
<fit-text w="301">Screencastify - Screen Video Recorder is sharing your screen.</fit-text>
<button><fit-text w="64">Stop sharing</fit-text></button>
<a><fit-text w="24">Hide</fit-text></a>`);

define('download-bar', `
<style>
:host { flex: none; position: relative; z-index: 5; box-sizing: border-box; height: 54px; display: flex; align-items: center; border-top: 1px solid #dedede; background: #fff; font-size: 12.500px; color: #55585b; }
.one { width: 222px; padding: 0 17px 0 19px; }
.two { width: 219px; padding-left: 17px; }
.mid { width: 218px; }
.three { width: 436px; padding: 0 16px 0 235px; }
fit-text.name { margin: 2px 0 0 13px; }
.two .name { margin-left: 12px; }
.all { margin: -2px 12px 0 78px; box-sizing: border-box; width: 73px; height: 30px; border: 1px solid #d5d9de; border-radius: 3px; display: flex; align-items: center; justify-content: center; color: #3f77cf; font-size: 12px; }
.all + ui-icon { margin-top: -2px; }
</style>
<download-item class="one"><ui-icon slot="icon" name="png"></ui-icon><fit-text class="name" w="78">classroom.png</fit-text><ui-icon slot="menu" name="up"></ui-icon></download-item>
<download-item class="two"><ui-icon slot="icon" name="zip"></ui-icon><fit-text class="name" w="81">all-6393028.zip</fit-text></download-item>
<download-item class="mid"></download-item>
<download-item class="three"><ui-icon slot="icon" name="pdf"></ui-icon><fit-text class="name" w="131">QuadrilateralPrope....pdf</fit-text><ui-icon slot="menu" name="up"></ui-icon></download-item>
<div class="all"><fit-text w="43">Show all</fit-text></div>
<ui-icon name="dismiss"></ui-icon>
<share-notice></share-notice>`);

define('task-button', `
<style>
:host { flex: none; box-sizing: border-box; width: 45.950px; height: 37px; padding: 0 4px; display: flex; }
div { flex: 1; display: flex; align-items: center; justify-content: center; box-sizing: border-box; border: solid transparent; border-width: 2px 0; }
:host([running]) div { border-bottom-color: #76b1df; }
:host([current]) { padding: 0 2px; }
:host([current]) div { background: #4a5243; border-top-color: #4a5243; }
</style>
<div><slot></slot></div>`);

const tray = ['drive', 'spotifyS', 'disc', 'printer', 'teams', 'usb', 'vpn', 'cloud', 'micS', 'diamond', 'shield', 'mic', 'battery', 'wifi', 'speaker'];

define('task-bar', `
<style>
:host { flex: none; height: 37px; display: flex; align-items: center; background: linear-gradient(90deg, #1c2614 0, #222b19 130px, #28301f 240px, #3c3f38 310px, #474747 380px); color: #f0f0f0; font-size: 12px; }
.tray { margin-left: auto; display: grid; grid-template-columns: repeat(15, 30px); justify-items: center; align-items: center; }
.ink { margin: 0 16px 0 9.500px; }
.clock { flex: none; width: 62px; margin: -2px 12px 0 8px; display: flex; flex-direction: column; align-items: center; line-height: 17px; font-size: 12px; }
.note { position: relative; flex: none; width: 20px; height: 20px; margin-right: 15px; }
.note svg { display: block; overflow: visible; }
/* unread count sits on the corner of the speech bubble */
.note b { position: absolute; left: 8px; top: 7px; width: 13px; height: 13px; border: 1px solid #999; border-radius: 50%; background: #444; font: 600 11px/13px "Open Sans", sans-serif; text-align: center; }
.edge { width: 1px; height: 37px; background: #777; margin-right: 4px; }
</style>
<task-button><ui-icon name="windows"></ui-icon></task-button>
<task-button><ui-icon name="search"></ui-icon></task-button>
<task-button running><ui-icon name="explorer"></ui-icon></task-button>
<task-button running current><ui-icon name="chromeA"></ui-icon></task-button>
<task-button><ui-icon name="recorder"></ui-icon></task-button>
<task-button running><ui-icon name="spotify"></ui-icon></task-button>
<task-button running><ui-icon name="chromeB"></ui-icon></task-button>
<task-button running><ui-icon name="excel"></ui-icon></task-button>
<task-button running><ui-icon name="notebook"></ui-icon></task-button>
<task-button running><ui-icon name="draw"></ui-icon></task-button>
<task-button running><ui-icon name="remote"></ui-icon></task-button>
<task-button running><ui-icon name="photos"></ui-icon></task-button>
<div class="tray">${tray.map(n => `<ui-icon name="${n}"></ui-icon>`).join('')}</div>
<ui-icon class="ink" name="ink"></ui-icon>
<fit-text w="21">ENG</fit-text>
<div class="clock"><fit-text w="41">8:47 AM</fit-text><fit-text w="55">2021-11-24</fit-text></div>
<div class="note"><svg width="16" height="16"><path d="M0 0h15v11H7l-3 3.500V11H0z" fill="#fff"/><path d="M2.500 3h10M2.500 5.500h10M2.500 8h7" stroke="#555"/></svg><b>2</b></div>
<div class="edge"></div>`);

// squeezes or stretches its line to exactly w pixels;
// registered last, when the fonts it inherits are already in place
class FitText extends HTMLElement {
  constructor() {
    super();
    this.attachShadow({ mode: 'open' });
    this.shadowRoot.innerHTML = '<style>:host{display:block;flex:none;text-align:left;white-space:pre} span{display:inline-block;transform-origin:0 50%}</style><span><slot></slot></span>';
  }
  connectedCallback() {
    const span = this.shadowRoot.querySelector('span');
    const w = Number(this.getAttribute('w'));
    span.style.transform = `scaleX(${(w / span.getBoundingClientRect().width).toFixed(4)})`;
    this.style.width = w + 'px';
    if (this.parentElement && this.parentElement.localName === 'button') this.style.margin = '0 auto';
  }
}
customElements.define('fit-text', FitText);
</script>
</body>
</html>
